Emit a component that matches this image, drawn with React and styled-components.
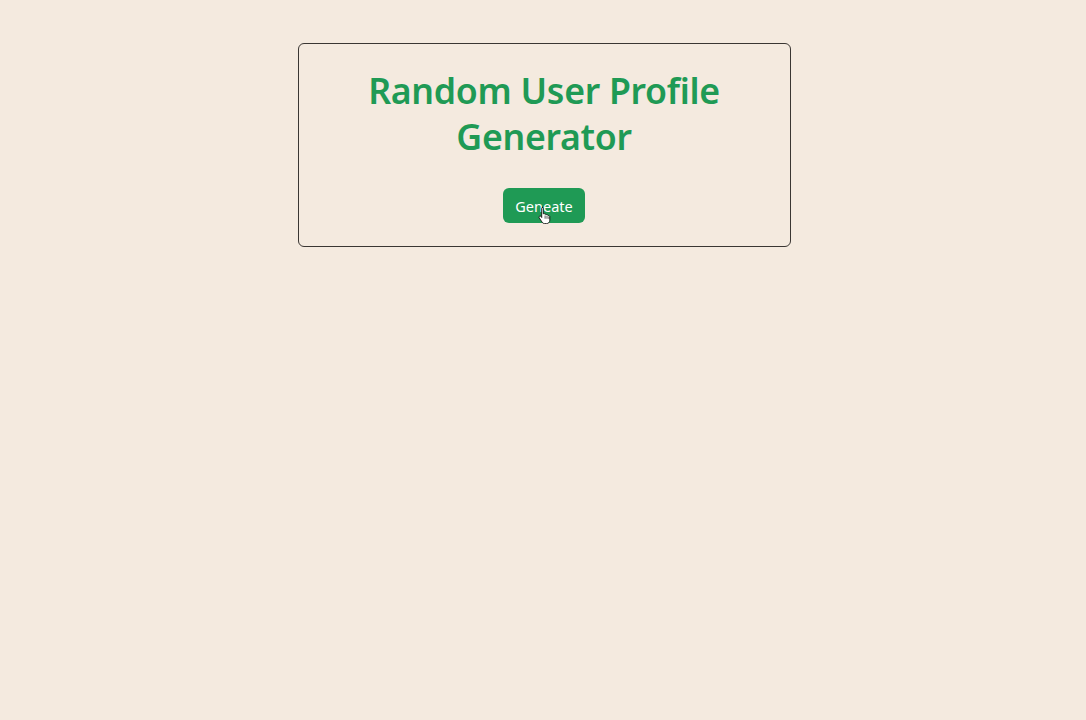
import styled, { createGlobalStyle } from "styled-components";

const GlobalStyle = createGlobalStyle`
  html, body {
    margin: 0;
    padding: 0;
    background-color: #f4eadf;
    font-family: "Noto Sans", "Open Sans", sans-serif;
  }
  body {
    min-height: 720px;
  }
`;

const Page = styled.div`
  display: flex;
  flex-direction: column;
  align-items: center;
  padding: 43px 0 0 2px;
`;

const Card = styled.div`
  width: 493px;
  box-sizing: border-box;
  border: 1px solid #3a3633;
  border-radius: 6px;
  padding: 23px 24px 23px;
  display: flex;
  flex-direction: column;
  align-items: center;
`;

const Title = styled.h1`
  margin: 0 0 29px;
  color: #1f9a55;
  font-size: 35.7px;
  font-weight: 600;
  line-height: 46px;
  text-align: center;
  letter-spacing: -0.3px;
`;

const ButtonWrap = styled.div`
  position: relative;
`;

const GenerateButton = styled.button`
  background-color: #1f9a55;
  color: #ffffff;
  border: none;
  border-radius: 6px;
  height: 35px;
  padding: 0 12px;
  font-family: "Noto Sans", "Open Sans", sans-serif;
  font-size: 14.5px;
  cursor: pointer;
`;

const Pointer = styled.svg`
  position: absolute;
  left: 35px;
  top: 18px;
  width: 14px;
  height: 18px;
  pointer-events: none;
`;

function App() {
  return (
    <Page>
      <GlobalStyle />
      <Card>
        <Title>
          Random User Profile
          <br />
          Generator
        </Title>
        <ButtonWrap>
          <GenerateButton>Geneate</GenerateButton>
          <Pointer viewBox="0 0 14 18">
            <path
              d="M4 1.2c.8 0 1.3.6 1.3 1.3v5.3l.2-.1c.7-.3 1.4.1 1.6.6.6-.3 1.4 0 1.6.6.7-.3 1.5.1 1.6.8.8-.2 1.5.3 1.5 1.1v3.4c0 1.900-1.4 3.4-3.3 3.4H6.6c-1 0-1.800-.5-2.400-1.300L1.3 12c-.5-.7-.3-1.500.4-1.800.5-.2 1.100-.1 1.400.4l.6.9V2.5c0-.7.5-1.300 1.300-1.300z"
              fill="#ffffff"
              stroke="#111111"
              strokeWidth="0.9"
            />
            <path d="M7.1 9.5v3.2M9 10v2.8M10.9 10.6v2.3" stroke="#111111" strokeWidth="0.7" />
          </Pointer>
        </ButtonWrap>
      </Card>
    </Page>
  );
}

export default App;
